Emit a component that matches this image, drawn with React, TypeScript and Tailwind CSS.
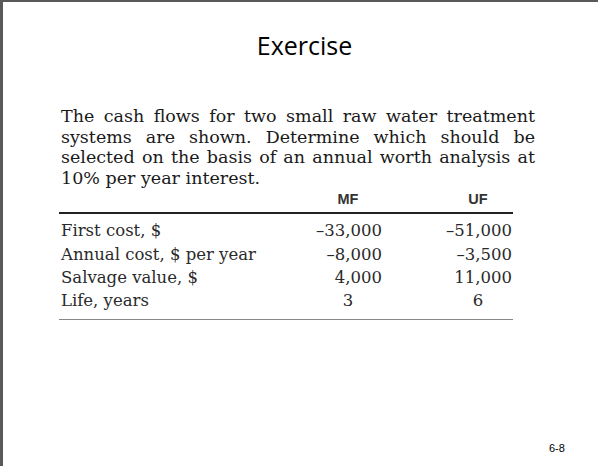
import React from 'react';

const rows = [
    { label: 'First cost, $', mf: '\u201333,000', uf: '\u201351,000', center: false },
    { label: 'Annual cost, $ per year', mf: '\u20138,000', uf: '\u20133,500', center: false },
    { label: 'Salvage value, $', mf: '4,000', uf: '11,000', center: false },
    { label: 'Life, years', mf: '3', uf: '6', center: true },
];

const serif = { fontFamily: '"DejaVu Serif", "Liberation Serif", serif' };

const App: React.FC = () => {
    return (
        <div className="w-[598px] h-[466px] bg-white border-l-[3px] border-t-2 border-[#595959] flex flex-col relative overflow-hidden">
            <h1 className="text-center text-[25px] leading-none text-black pt-[31px] pl-[8px]" style={{ fontFamily: '"Open Sans", sans-serif' }}>
                Exercise
            </h1>
            <p className="ml-[58px] mt-[48px] w-[474px] text-[17.5px] leading-[20.5px] text-[#1a1a1a] text-justify" style={serif}>
                The cash flows for two small raw water treatment systems are shown. Determine which should be selected on the basis of an annual worth analysis at 10% per year interest.
            </p>
            <div className="ml-[56px] w-[454px]">
                <div className="flex text-[14.5px] font-bold text-[#333] h-[24px] items-center" style={{ fontFamily: '"Liberation Sans", sans-serif' }}>
                    <div className="w-[255px]" />
                    <div className="w-[68px] text-center">MF</div>
                    <div className="w-[62px]" />
                    <div className="w-[68px] text-center">UF</div>
                </div>
                <div className="border-t-2 border-[#222] pt-[6px] pb-[6px] border-b border-b-[#888]" style={serif}>
                    {rows.map((r) => (
                        <div key={r.label} className="flex h-[23.3px] items-center text-[16.5px] text-[#2a2a2a]">
                            <div className="w-[255px] pl-[2px]">{r.label}</div>
                            <div className={`w-[68px] ${r.center ? 'text-center' : 'text-right'}`}>{r.mf}</div>
                            <div className="w-[62px]" />
                            <div className={`w-[68px] ${r.center ? 'text-center' : 'text-right'}`}>{r.uf}</div>
                        </div>
                    ))}
                </div>
            </div>
            <div className="absolute left-[546px] top-[438px] text-[11px] text-black" style={{ fontFamily: '"Liberation Sans", sans-serif' }}>
                6-8
            </div>
        </div>
    );
};

export default App;
